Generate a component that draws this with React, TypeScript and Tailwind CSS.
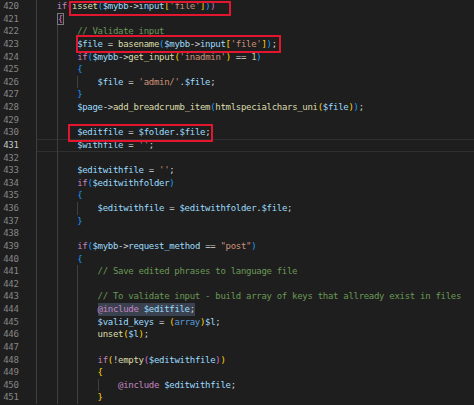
import React from 'react';

type Tok = [string, string];

type Line = {
  n: number;
  guides: number;
  toks: Tok[];
  selected?: boolean;
};

const K = '#c586c0';
const F = '#dcdcaa';
const V = '#9cdcfe';
const S = '#ce9178';
const C = '#6a9955';
const T = '#d4d4d4';
const N = '#b5cea8';
const B = '#569cd6';
const G = '#ffd700';
const P = '#da70d6';
const L = '#179fff';

const lines: Line[] = [
  { n: 420, guides: 1, toks: [['if', K], ['(', P], ['isset', F], ['(', L], ['$mybb', V], ['->', T], ['input', V], ['[', G], ["'file'", S], [']', G], [')', L], [')', P]] },
  { n: 421, guides: 1, toks: [['{', P]] },
  { n: 422, guides: 2, toks: [['// Validate input', C]] },
  { n: 423, guides: 2, toks: [['$file', V], [' = ', T], ['basename', F], ['(', L], ['$mybb', V], ['->', T], ['input', V], ['[', G], ["'file'", S], [']', G], [')', L], [';', T]] },
  { n: 424, guides: 2, toks: [['if', K], ['(', L], ['$mybb', V], ['->', T], ['get_input', F], ['(', G], ["'inadmin'", S], [')', G], [' == ', T], ['1', N], [')', L]] },
  { n: 425, guides: 2, toks: [['{', L]] },
  { n: 426, guides: 3, toks: [['$file', V], [' = ', T], ["'admin/'", S], ['.', T], ['$file', V], [';', T]] },
  { n: 427, guides: 2, toks: [['}', L]] },
  { n: 428, guides: 2, toks: [['$page', V], ['->', T], ['add_breadcrumb_item', F], ['(', L], ['htmlspecialchars_uni', F], ['(', G], ['$file', V], [')', G], [')', L], [';', T]] },
  { n: 429, guides: 2, toks: [] },
  { n: 430, guides: 2, toks: [['$editfile', V], [' = ', T], ['$folder', V], ['.', T], ['$file', V], [';', T]] },
  { n: 431, guides: 2, toks: [['$withfile', V], [' = ', T], ["''", S], [';', T]] },
  { n: 432, guides: 2, toks: [] },
  { n: 433, guides: 2, toks: [['$editwithfile', V], [' = ', T], ["''", S], [';', T]] },
  { n: 434, guides: 2, toks: [['if', K], ['(', L], ['$editwithfolder', V], [')', L]] },
  { n: 435, guides: 2, toks: [['{', L]] },
  { n: 436, guides: 3, toks: [['$editwithfile', V], [' = ', T], ['$editwithfolder', V], ['.', T], ['$file', V], [';', T]] },
  { n: 437, guides: 2, toks: [['}', L]] },
  { n: 438, guides: 2, toks: [] },
  { n: 439, guides: 2, toks: [['if', K], ['(', L], ['$mybb', V], ['->', T], ['request_method', V], [' == ', T], ['"post"', S], [')', L]] },
  { n: 440, guides: 2, toks: [['{', L]] },
  { n: 441, guides: 3, toks: [['// Save edited phrases to language file', C]] },
  { n: 442, guides: 3, toks: [] },
  { n: 443, guides: 3, toks: [['// To validate input - build array of keys that allready exist in files', C]] },
  { n: 444, guides: 3, selected: true, toks: [['@include', K], [' ', T], ['$editfile', V], [';', T]] },
  { n: 445, guides: 3, toks: [['$valid_keys', V], [' = ', T], ['(', G], ['array', B], [')', G], ['$l', V], [';', T]] },
  { n: 446, guides: 3, toks: [['unset', F], ['(', G], ['$l', V], [')', G], [';', T]] },
  { n: 447, guides: 3, toks: [] },
  { n: 448, guides: 3, toks: [['if', K], ['(', G], ['!', T], ['empty', F], ['(', P], ['$editwithfile', V], [')', P], [')', G]] },
  { n: 449, guides: 3, toks: [['{', G]] },
  { n: 450, guides: 4, toks: [['@include', K], [' ', T], ['$editwithfile', V], [';', T]] },
  { n: 451, guides: 3, toks: [['}', G]] },
];

const CURRENT = 431;

function CodeLine({ line }: { line: Line }) {
  const current = line.n === CURRENT;
  const guides = Array.from({ length: line.guides });
  return (
    <div className="flex h-[12.63px] items-stretch">
      <div className={`w-[18.6px] text-right leading-[12.63px] tracking-[-0.3px] ${current ? 'text-[#c6c6c6]' : 'text-[#858585]'}`}>
        {line.n}
      </div>
      <div className="w-[17.6px]" />
      <div
        className={`flex flex-1 items-stretch ${current ? 'shadow-[inset_0_1px_0_#303030,inset_0_-1px_0_#303030]' : ''}`}
      >
        {guides.map((_, i) => (
          <span key={i} className="inline-block h-full w-[20.47px] shrink-0 border-l border-[#3f3f3f]" />
        ))}
        <span className={`whitespace-pre leading-[12.63px] tracking-[-0.3px] ${line.selected ? 'bg-[#3a4250]' : ''}`}>
          {line.toks.map(([text, color], i) =>
            line.n === 421 ? (
              <span key={i} className="inline-block border border-[#7a7a7a] leading-[10px]" style={{ color }}>
                {text}
              </span>
            ) : (
              <span key={i} style={{ color }}>
                {text}
              </span>
            )
          )}
        </span>
      </div>
    </div>
  );
}

export default function App() {
  return (
    <div className="relative w-[474px] h-[405px] overflow-hidden bg-[#1e1e1e] font-['DejaVu_Sans_Mono',monospace] text-[9px]">
      <div className="flex flex-col">
        {lines.map((l) => (
          <CodeLine key={l.n} line={l} />
        ))}
      </div>
      {/* red highlight boxes */}
      <div className="absolute left-[69px] top-[1px] w-[162px] h-[15px] border-2 border-[#e3162f]" />
      <div className="absolute left-[76px] top-[35px] w-[205px] h-[18px] border-2 border-[#e3162f]" />
      <div className="absolute left-[68px] top-[124px] w-[145px] h-[18px] border-2 border-[#e3162f]" />
    </div>
  );
}
